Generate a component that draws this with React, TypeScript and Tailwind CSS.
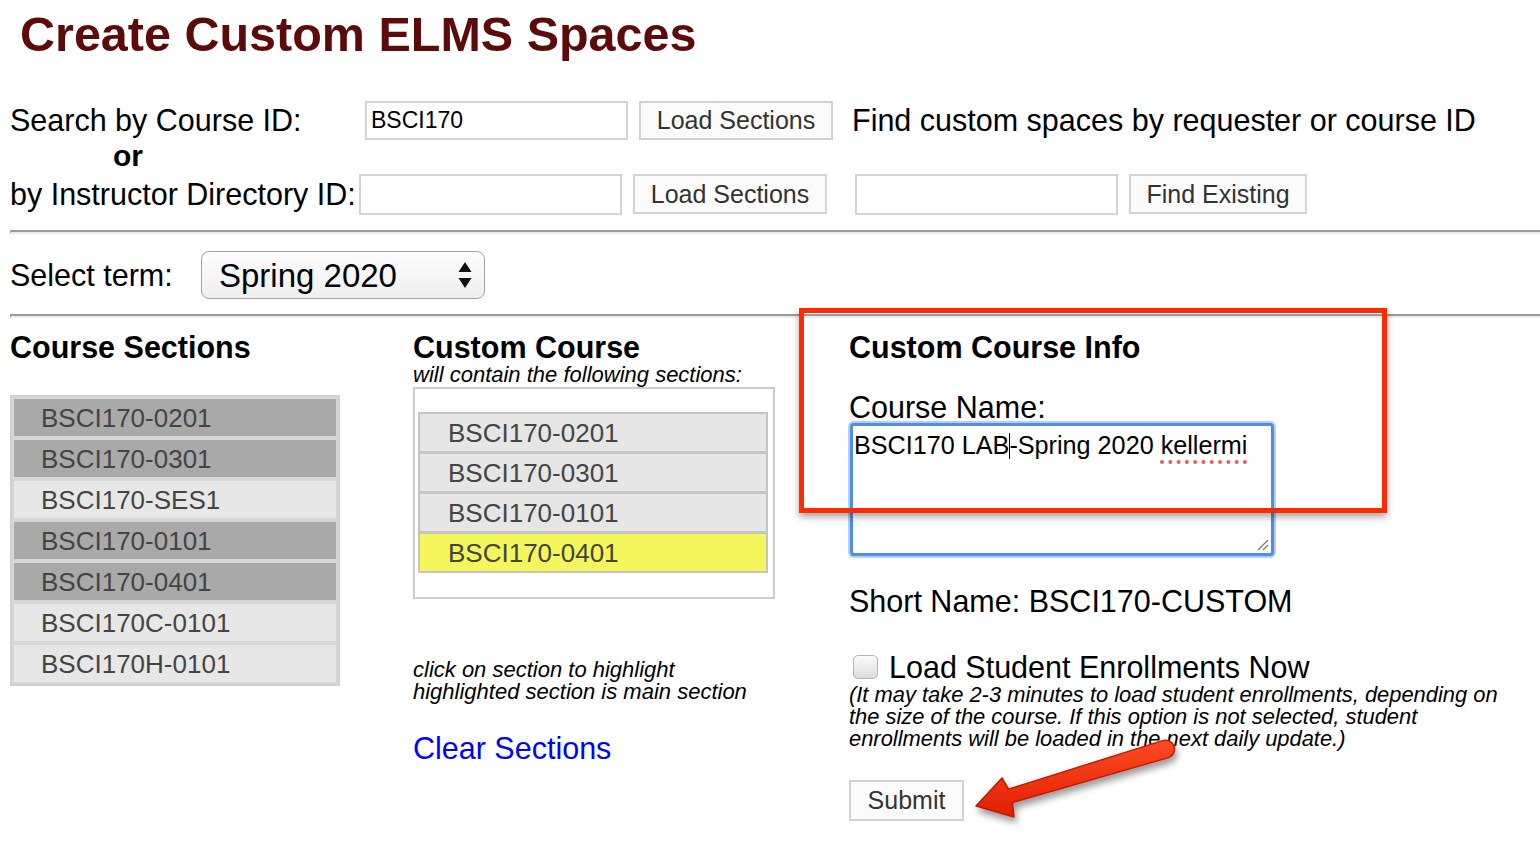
import React from 'react'

const courseSections = [
  { id: 'BSCI170-0201', picked: true },
  { id: 'BSCI170-0301', picked: true },
  { id: 'BSCI170-SES1', picked: false },
  { id: 'BSCI170-0101', picked: true },
  { id: 'BSCI170-0401', picked: true },
  { id: 'BSCI170C-0101', picked: false },
  { id: 'BSCI170H-0101', picked: false },
]

const customSections = [
  { id: 'BSCI170-0201', main: false },
  { id: 'BSCI170-0301', main: false },
  { id: 'BSCI170-0101', main: false },
  { id: 'BSCI170-0401', main: true },
]

function GrayButton({ label, className }: { label: string; className: string }) {
  return (
    <button
      className={`flex items-center justify-center border-2 border-[#d2d2d2] bg-[#fbfbfb] text-[25px] leading-none text-[#333] ${className}`}
    >
      {label}
    </button>
  )
}

function TextBox({ value, className }: { value?: string; className: string }) {
  return (
    <div
      className={`flex items-center border-2 border-[#d4d4d4] bg-white pl-[4px] text-[23px] leading-none text-black ${className}`}
    >
      {value}
    </div>
  )
}

export default function App() {
  return (
    <div className="relative h-[866px] w-[1540px] overflow-hidden bg-white text-black font-['Liberation_Sans',Arial,sans-serif]">
      <h1 className="ml-[20px] pt-[10px] text-[48.5px] font-bold leading-[48px] text-[#5c0b0b]">
        Create Custom ELMS Spaces
      </h1>

      {/* search rows */}
      <div className="mt-[42px] pl-[10px]">
        <div className="flex h-[40px] items-center">
          <span className="w-[355px] text-[30.5px] leading-[40px]">Search by Course ID:</span>
          <TextBox value="BSCI170" className="h-[39px] w-[263px]" />
          <GrayButton label="Load Sections" className="ml-[11px] h-[39px] w-[194px]" />
          <span className="ml-[19px] text-[30.5px] leading-[40px]">Find custom spaces by requester or course ID</span>
        </div>
        <div className="ml-[103px] text-[30px] font-bold leading-[32px]">or</div>
        <div className="flex h-[44px] items-center">
          <span className="w-[349px] whitespace-nowrap text-[30.5px] leading-[40px]">by Instructor Directory ID:</span>
          <TextBox className="h-[41px] w-[263px]" />
          <GrayButton label="Load Sections" className="ml-[11px] h-[40px] w-[194px]" />
          <TextBox className="ml-[28px] h-[41px] w-[263px]" />
          <GrayButton label="Find Existing" className="ml-[11px] h-[40px] w-[178px]" />
        </div>
      </div>

      <div className="ml-[10px] mt-[14px] h-[4px] border-l border-t-2 border-[#9a9a9a] border-b-2 border-b-[#ececec]" />

      {/* term */}
      <div className="ml-[10px] mt-[17px] flex h-[48px] items-center">
        <span className="w-[191px] text-[30.5px] leading-[40px]">Select term:</span>
        <div className="flex h-[48px] w-[284px] items-center justify-between rounded-[8px] border border-[#a3a3a3] bg-gradient-to-b from-[#fdfdfd] to-[#efefef] pl-[17px] pr-[12px]">
          <span className="text-[33px] leading-none">Spring 2020</span>
          <svg width="14" height="28" viewBox="0 0 14 28">
            <path d="M7 1 L13.5 11 L0.5 11 Z" fill="#111" />
            <path d="M7 27 L13.5 17 L0.5 17 Z" fill="#111" />
          </svg>
        </div>
      </div>

      <div className="ml-[10px] mt-[15px] h-[4px] border-l border-t-2 border-[#9a9a9a] border-b-2 border-b-[#ececec]" />

      {/* three columns */}
      <div className="mt-[11px] flex pl-[10px]">
        <div className="w-[403px]">
          <h2 className="text-[30.5px] font-bold leading-[36px]">Course Sections</h2>
          <div className="mt-[30px] w-[330px] border-2 border-[#d0d0d0] bg-white">
            <div className="flex flex-col gap-[4px] border-2 border-[#d6d6d6] bg-[#d6d6d6]">
              {courseSections.map((s) => (
                <div
                  key={s.id}
                  className={`flex h-[37px] items-center pl-[27px] text-[26px] leading-none text-[#444] ${
                    s.picked ? 'bg-[#a9a9a9]' : 'bg-[#e7e7e7]'
                  }`}
                >
                  {s.id}
                </div>
              ))}
            </div>
          </div>
        </div>

        <div className="w-[436px]">
          <h2 className="text-[30.5px] font-bold leading-[36px]">Custom Course</h2>
          <p className="-mt-[1px] text-[22px] italic leading-[22px]">will contain the following sections:</p>
          <div className="mt-[1px] w-[362px] border-2 border-[#cccccc] pb-[24px] pl-[3px] pr-[5px] pt-[23px]">
            {customSections.map((s, i) => (
              <div
                key={s.id}
                className={`flex h-[41px] items-center border-2 border-[#c4c4c4] pl-[28px] text-[26px] leading-none text-[#444] ${
                  s.main ? 'bg-[#f3f75b]' : 'bg-[#e6e6e6]'
                } ${i > 0 ? '-mt-px' : ''}`}
              >
                {s.id}
              </div>
            ))}
          </div>
          <p className="mt-[60px] text-[22px] italic leading-[22px]">
            click on section to highlight
            <br />
            highlighted section is main section
          </p>
          <a className="mt-[27px] block text-[30.5px] leading-[36px] text-[#0000ff]">Clear Sections</a>
        </div>

        <div className="flex-1">
          <h2 className="text-[30.5px] font-bold leading-[36px]">Custom Course Info</h2>
          <div className="mt-[28px] text-[30.5px] leading-[28px]">Course Name:</div>
          <div className="relative ml-[1px] mt-[2px] h-[133px] w-[424px] rounded-[4px] border-[3px] border-[#4f8de6] bg-white pl-[1px] pt-[4px] shadow-[0_0_0_2px_#b3cff4]">
            <div className="whitespace-nowrap text-[25.2px] leading-[30px]">
              BSCI170 LAB
              <span className="-mr-px inline-block h-[26px] w-px bg-black align-[-5px]" />
              -Spring 2020{' '}
              <span className="underline decoration-[#ef5b5b] decoration-dotted decoration-[4px] underline-offset-[6px]">
                kellermi
              </span>
            </div>
            <svg className="absolute bottom-[2px] right-[2px]" width="13" height="13" viewBox="0 0 13 13">
              <path d="M12 2 L2 12 M12 7 L7 12" stroke="#7a7a7a" strokeWidth="1.2" />
            </svg>
          </div>
          <div className="mt-[27px] text-[30.5px] leading-[36px]">Short Name: BSCI170-CUSTOM</div>
          <div className="mt-[30px] flex h-[36px] items-center">
            <span className="ml-[4px] h-[24px] w-[25px] rounded-[5px] border border-[#b3b3b3] bg-gradient-to-b from-[#fbfbfb] to-[#dcdcdc]" />
            <span className="ml-[11px] text-[30.5px] leading-[36px]">Load Student Enrollments Now</span>
          </div>
          <p className="-mt-px whitespace-nowrap text-[21.9px] italic leading-[22px]">
            (It may take 2-3 minutes to load student enrollments, depending on
            <br />
            the size of the course. If this option is not selected, student
            <br />
            enrollments will be loaded in the next daily update.)
          </p>
          <GrayButton label="Submit" className="mt-[30px] h-[41px] w-[115px]" />
        </div>
      </div>

      {/* annotation overlays */}
      <div className="absolute left-[799px] top-[308px] h-[205px] w-[588px] border-[5px] border-[#ff2a00] shadow-[0_4px_7px_rgba(0,0,0,0.35)]" />
      <svg className="absolute left-0 top-0" width="1540" height="866" viewBox="0 0 1540 866">
        <defs>
          <linearGradient id="arrowFill" x1="0" y1="0" x2="0" y2="1">
            <stop offset="0" stopColor="#ff4a24" />
            <stop offset="1" stopColor="#e01f00" />
          </linearGradient>
          <filter id="arrowShadow" x="-20%" y="-40%" width="140%" height="180%">
            <feDropShadow dx="2" dy="5" stdDeviation="3.5" floodColor="#000" floodOpacity="0.4" />
          </filter>
        </defs>
        <path
          d="M976 806 L1002 778 L1008.5 789.1 L1163.4 740.4 A9 9 0 0 1 1168.6 757.6 L1012.5 802.5 L1014 817 Z"
          fill="url(#arrowFill)"
          stroke="#c01a00"
          strokeWidth="1.5"
          strokeLinejoin="round"
          filter="url(#arrowShadow)"
        />
      </svg>
    </div>
  )
}
